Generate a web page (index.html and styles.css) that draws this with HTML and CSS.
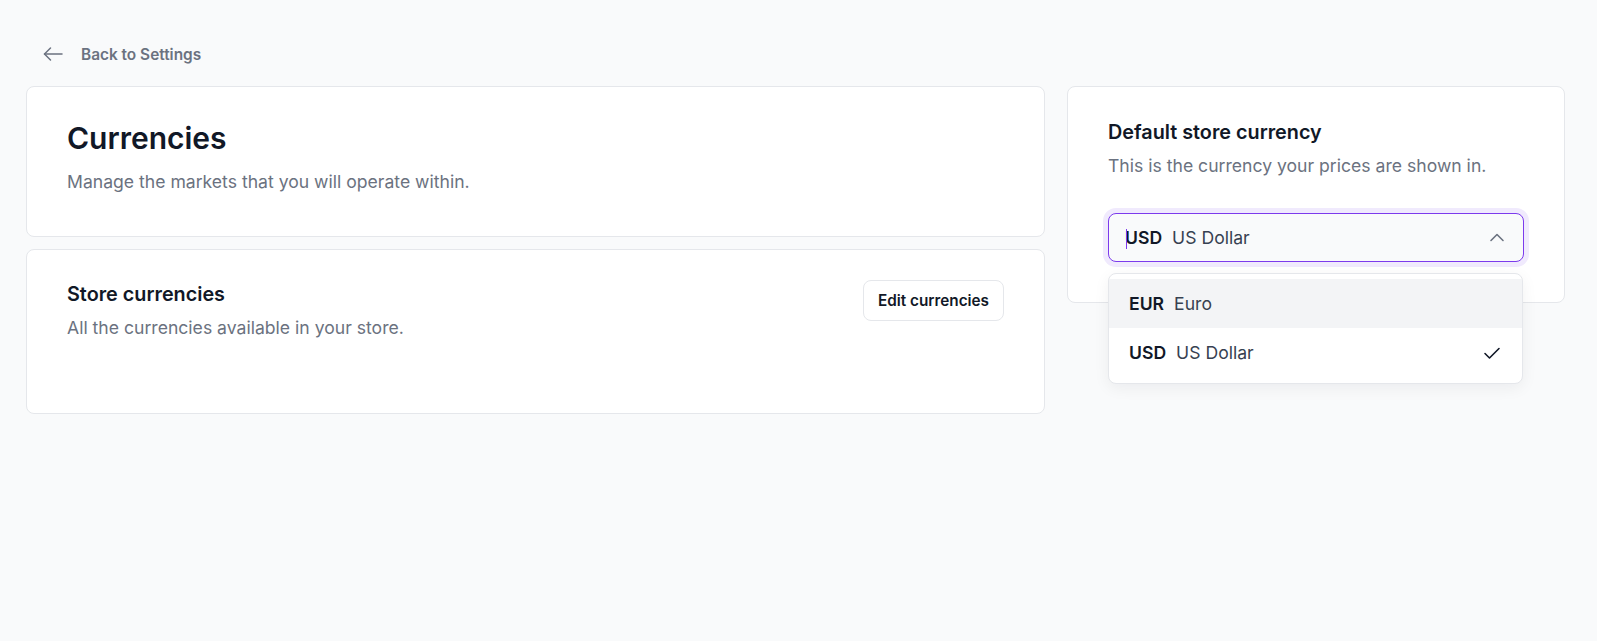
FILE: index.html
```html
<!DOCTYPE html>
<html lang="en">
<head>
    <meta charset="UTF-8">
    <meta name="viewport" content="width=device-width, initial-scale=1.0">
    <title>Currencies</title>
    <link rel="stylesheet" href="styles.css">
</head>
<body>
    <div class="page">
        <a class="back" href="#">
            <svg width="20" height="20" viewBox="0 0 20 20" fill="none" stroke="#6b7280" stroke-width="1.5" stroke-linecap="round" stroke-linejoin="round">
                <path d="M19 10H1.5"/>
                <path d="M7.5 4L1.5 10l6 6"/>
            </svg>
            <span>Back to Settings</span>
        </a>

        <div class="layout">
            <div class="main-col">
                <div class="card card-head">
                    <h1>Currencies</h1>
                    <p class="sub">Manage the markets that you will operate within.</p>
                </div>
                <div class="card card-store">
                    <div class="store-top">
                        <div>
                            <h2>Store currencies</h2>
                            <p class="sub">All the currencies available in your store.</p>
                        </div>
                        <button class="btn">Edit currencies</button>
                    </div>
                </div>
            </div>

            <div class="side-col">
                <div class="card card-default">
                    <h2>Default store currency</h2>
                    <p class="sub">This is the currency your prices are shown in.</p>
                    <div class="select-wrap">
                        <div class="select">
                            <span class="caret"></span>
                            <span class="code">USD</span>
                            <span class="name">US Dollar</span>
                            <svg class="chev" width="20" height="20" viewBox="0 0 20 20" fill="none" stroke="#6b7280" stroke-width="1.6" stroke-linecap="round" stroke-linejoin="round">
                                <path d="M4 12.5L10 6.5l6 6"/>
                            </svg>
                        </div>
                        <ul class="menu">
                            <li class="option active"><span class="code">EUR</span><span class="name">Euro</span></li>
                            <li class="option"><span class="code">USD</span><span class="name">US Dollar</span>
                                <svg class="check" width="20" height="20" viewBox="0 0 20 20" fill="none" stroke="#111827" stroke-width="1.6" stroke-linecap="round" stroke-linejoin="round">
                                    <path d="M3 10.5l4.5 4.5 9.5-9.5"/>
                                </svg>
                            </li>
                        </ul>
                    </div>
                </div>
            </div>
        </div>
    </div>
</body>
</html>
```

FILE: styles.css
```css
*{
    margin: 0;
    padding: 0;
    box-sizing: border-box;
}
body{
    background: #f9fafb;
    font-family: Inter, "Noto Sans", sans-serif;
    color: #111827;
}
.page{
    padding: 44px 32px 0 26px;
}
.back{
    display: flex;
    align-items: center;
    gap: 18px;
    padding-left: 17px;
    height: 20px;
    text-decoration: none;
    color: #6b7280;
    font-size: 15.4px;
    font-weight: 600;
}
.layout{
    display: grid;
    grid-template-columns: 1019px 1fr;
    gap: 22px;
    margin-top: 22px;
    align-items: start;
}
.main-col{
    display: flex;
    flex-direction: column;
    gap: 12px;
}
.card{
    background: #fff;
    border: 1px solid #e5e7eb;
    border-radius: 8px;
}
.card-head{
    padding: 31px 40px 42px;
}
h1{
    font-size: 30px;
    line-height: 40px;
    font-weight: 600;
}
h2{
    font-size: 19.8px;
    line-height: 28px;
    font-weight: 600;
}
.sub{
    font-size: 17.6px;
    line-height: 24px;
    color: #6b7280;
    margin-top: 8px;
}
.card-head .sub{
    margin-top: 12px;
}
.card-store{
    padding: 30px 40px 73px;
}
.store-top{
    display: flex;
    justify-content: space-between;
    align-items: flex-start;
}
.btn{
    height: 41px;
    padding: 0 14px;
    background: #fff;
    border: 1px solid #e5e7eb;
    border-radius: 8px;
    font-family: inherit;
    font-size: 15.3px;
    font-weight: 600;
    color: #111827;
}
.card-default{
    padding: 31px 40px 40px;
}
.select-wrap{
    position: relative;
    margin-top: 35px;
}
.select{
    position: relative;
    display: flex;
    align-items: center;
    height: 49px;
    padding: 0 16px;
    background: #f9fafb;
    border: 1px solid #7c3aed;
    border-radius: 8px;
    box-shadow: 0 0 0 5px #f0eafd;
    font-size: 17.6px;
}
.caret{
    position: absolute;
    left: 17px;
    top: 15px;
    width: 1px;
    height: 20px;
    background: #7c3aed;
}
.code{
    font-weight: 600;
    color: #111827;
}
.name{
    margin-left: 10px;
    color: #374151;
}
.chev{
    margin-left: auto;
}
.menu{
    position: absolute;
    top: 60px;
    left: 0;
    right: 1px;
    list-style: none;
    background: #fff;
    border: 1px solid #e5e7eb;
    border-radius: 8px;
    padding: 5px 0 6px;
    box-shadow: 0 4px 16px rgba(17, 24, 39, 0.06);
    font-size: 17.6px;
}
.option{
    display: flex;
    align-items: center;
    height: 49px;
    padding: 0 20px;
}
.option.active{
    background: #f3f4f6;
}
.check{
    margin-left: auto;
}
```
